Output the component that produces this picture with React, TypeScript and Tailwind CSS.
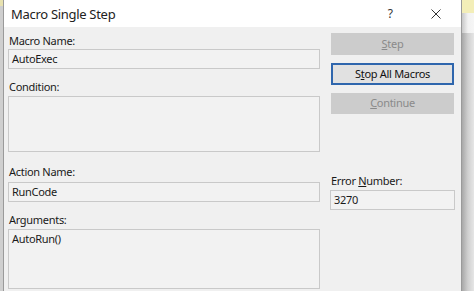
import React from "react";

const font = { fontFamily: '"Noto Sans", "Open Sans", sans-serif' };

function Field({ value, h }: { value?: string; h: string }) {
  return (
    <div className={`border border-[#c9c9c9] bg-[#f2f2f2] px-[3px] text-[11px] leading-[18px] tracking-[-0.3px] text-[#1a1a1a] ${h}`}>
      {value}
    </div>
  );
}

const label = "h-[16px] pl-[1px] text-[11px] leading-[16px] tracking-[-0.3px] text-[#1a1a1a]";

export default function App() {
  return (
    <div className="flex h-[291px] w-[474px] overflow-hidden bg-[#f0f0f0] text-black" style={font}>
      <div className="flex w-[3px] flex-col">
        <div className="h-[6px] bg-[#e8e2b0]" />
        <div className="flex-1 bg-[#cfcfcf]" />
      </div>
      <div className="flex w-[459px] flex-col border-x border-[#9a9a9a] bg-[#f0f0f0]">
        <div className="flex h-[27px] items-center bg-white">
          <div className="ml-[7px] text-[13px] leading-[20px] tracking-[-0.3px] text-[#222]">Macro Single Step</div>
          <div className="ml-auto mr-[38px] text-[12px] leading-none text-[#333]">?</div>
          <svg width="10" height="10" viewBox="0 0 10 10" className="mr-[20px]">
            <path d="M0.5 0.5 L9.5 9.5 M9.5 0.5 L0.5 9.5" stroke="#333" strokeWidth="1" />
          </svg>
        </div>
        <div className="flex flex-1 pl-[4px] pt-[6px]">
          <div className="flex w-[312px] flex-col">
            <div className={label}>Macro Name:</div>
            <Field value="AutoExec" h="h-[20px]" />
            <div className={`mt-[10px] ${label}`}>Condition:</div>
            <div className="mt-[1px]"><Field h="h-[56px]" /></div>
            <div className={`mt-[12px] ${label}`}>Action Name:</div>
            <div className="mt-[2px]"><Field value="RunCode" h="h-[20px]" /></div>
            <div className={`mt-[10px] ${label}`}>Arguments:</div>
            <div className="mt-[1px]"><Field value="AutoRun()" h="h-[60px]" /></div>
          </div>
          <div className="ml-[10px] flex w-[125px] flex-col">
            <div className="ml-[1px] flex h-[22px] w-[123px] items-center justify-center bg-[#cccccc] text-[11px] tracking-[-0.3px] text-[#8a8a8a]">
              <span><span className="underline">S</span>tep</span>
            </div>
            <div className="ml-[1px] mt-[8px] flex h-[22px] w-[123px] items-center justify-center border-2 border-[#2f66ad] bg-[#e1e1e1] text-[11px] tracking-[-0.3px] text-[#111]">
              <span>S<span className="underline">t</span>op All Macros</span>
            </div>
            <div className="ml-[1px] mt-[8px] flex h-[21px] w-[123px] items-center justify-center bg-[#cccccc] text-[11px] tracking-[-0.3px] text-[#8a8a8a]">
              <span><span className="underline">C</span>ontinue</span>
            </div>
            <div className={`mt-[59px] ${label}`}>
              Error <span className="underline">N</span>umber:
            </div>
            <div className="mt-[1px]"><Field value="3270" h="h-[20px]" /></div>
          </div>
        </div>
      </div>
      <div className="flex flex-1 flex-col">
        <div className="h-[13px] bg-[#f3eeb8]" />
        <div className="h-[20px] bg-gradient-to-r from-[#c8c8c8] via-[#f2f2f2] to-[#f6f6f6]" />
        <div className="flex-1 bg-gradient-to-r from-[#a8a8a8] via-[#d0d0d0] to-[#e6e6e6]" />
      </div>
    </div>
  );
}
